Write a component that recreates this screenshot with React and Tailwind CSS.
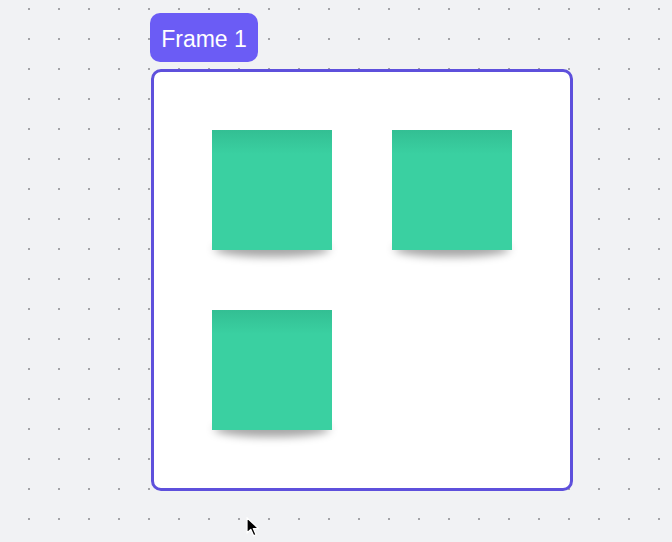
import React from "react";

const notes = [1, 2, 3];

function StickyNote() {
  return (
    <div className="relative w-[120px] h-[120px]">
      <div className="absolute left-[2px] right-[2px] bottom-[-7px] h-[16px] rounded-[50%] bg-black/35 blur-[4px]" />
      <div className="relative w-full h-full bg-gradient-to-b from-[#33bf93] via-[#3ad0a1] via-[20%] to-[#3ad0a1]" />
    </div>
  );
}

function Cursor() {
  return (
    <svg width="16" height="22" viewBox="0 0 14 20" className="absolute left-[245px] top-[516px]">
      <path
        d="M1.5 1.5 L1.5 15.5 L5 12.2 L7.6 18 L9.8 17 L7.3 11.4 L12 11.4 Z"
        fill="#000"
        stroke="#fff"
        strokeWidth="1.2"
        strokeLinejoin="round"
      />
    </svg>
  );
}

export default function App() {
  return (
    <div
      className="relative w-full h-[542px] overflow-hidden bg-[#f1f2f4] bg-[radial-gradient(circle,#a3a3a7_1px,transparent_1.3px)] bg-[length:30px_30px] bg-[position:14px_24px]"
      style={{ fontFamily: '"Liberation Sans", Arial, sans-serif' }}
    >
      <div className="flex flex-col items-start pl-[150px] pt-[13px] gap-[7px]">
        <div className="h-[49px] w-[108px] pt-[3px] flex items-center justify-center rounded-[10px] bg-[#6b5cf5] text-white text-[23px] leading-none">
          Frame 1
        </div>
        <div className="ml-[1px] w-[422px] h-[422px] rounded-[10px] border-[3px] border-[#5e50dc] bg-white pt-[58px] pl-[58px]">
          <div className="grid grid-cols-[120px_120px] gap-[60px]">
            {notes.map((n) => (
              <StickyNote key={n} />
            ))}
          </div>
        </div>
      </div>
      <Cursor />
    </div>
  );
}
